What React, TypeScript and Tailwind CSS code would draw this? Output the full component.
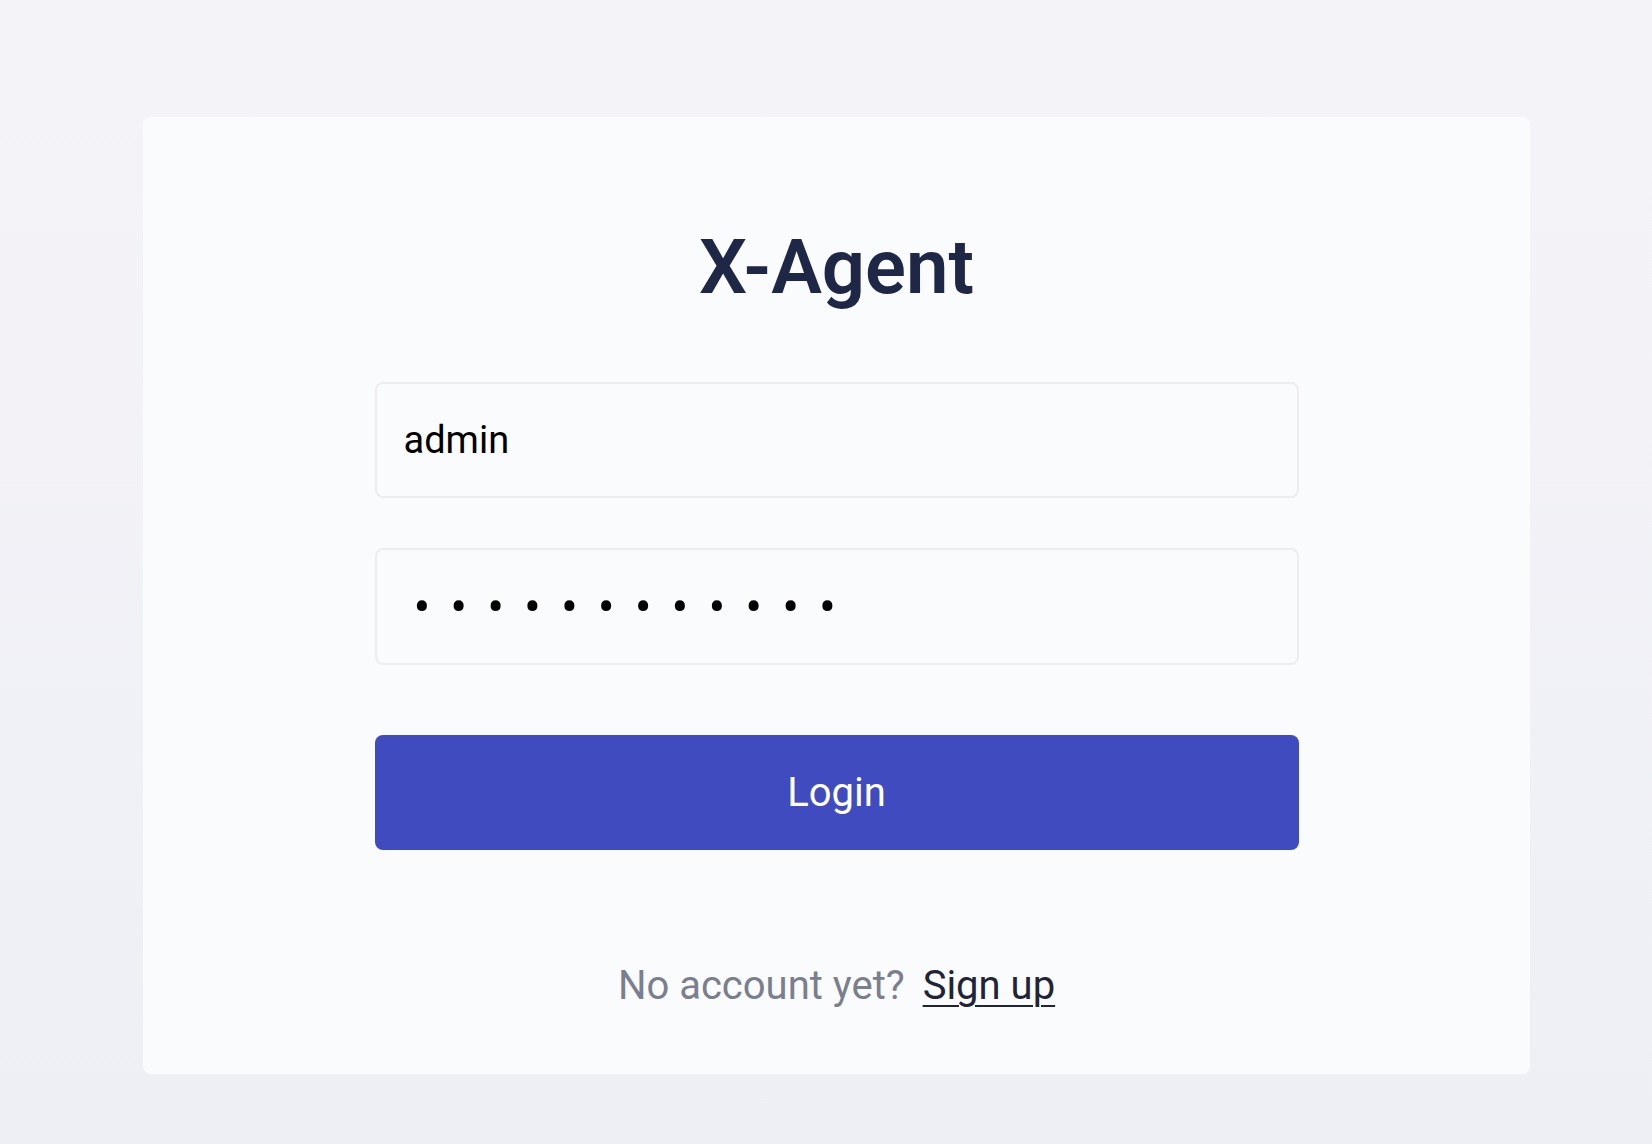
import React, { useState } from 'react';

const App: React.FC = () => {
  const [username, setUsername] = useState('admin');
  const [password, setPassword] = useState('123456789012');

  const handleSubmit = (e: React.FormEvent<HTMLFormElement>) => {
    e.preventDefault();
  };

  return (
    <div className="min-h-screen w-full bg-gradient-to-b from-[#f4f4f8] to-[#eeeff5] pt-[117px] font-['Roboto',sans-serif]">
      <div className="ml-[143px] w-[1387px] rounded-[8px] bg-[#fafbfd] pt-[112px] pb-[68px]">
        <h1 className="text-center text-[76px] leading-none font-semibold text-[#1f2746]">X-Agent</h1>

        <form onSubmit={handleSubmit} className="mx-auto mt-[77px] w-[924px]">
          <input
            type="text"
            value={username}
            onChange={(e) => setUsername(e.target.value)}
            className="block h-[116px] w-full rounded-[8px] border-2 border-[#ededf0] bg-[#fafbfd] px-[27px] text-[38px] text-black outline-none"
          />
          <input
            type="password"
            value={password}
            onChange={(e) => setPassword(e.target.value)}
            className="mt-[50px] block h-[117px] w-full rounded-[8px] border-2 border-[#ededf0] bg-[#fafbfd] px-[37px] text-[50px] tracking-[20px] text-black outline-none"
          />
          <button
            type="submit"
            className="mt-[70px] block h-[115px] w-full rounded-[8px] bg-[#3f4bbf] text-[40px] text-white"
          >
            Login
          </button>
        </form>

        <p className="mt-[116px] text-center text-[40px] leading-none text-[#7a7f8f]">
          No account yet?
          <a href="#" className="ml-[18px] text-[#1f2537] underline underline-offset-[6px] decoration-2">
            Sign up
          </a>
        </p>
      </div>
    </div>
  );
};

export default App;
